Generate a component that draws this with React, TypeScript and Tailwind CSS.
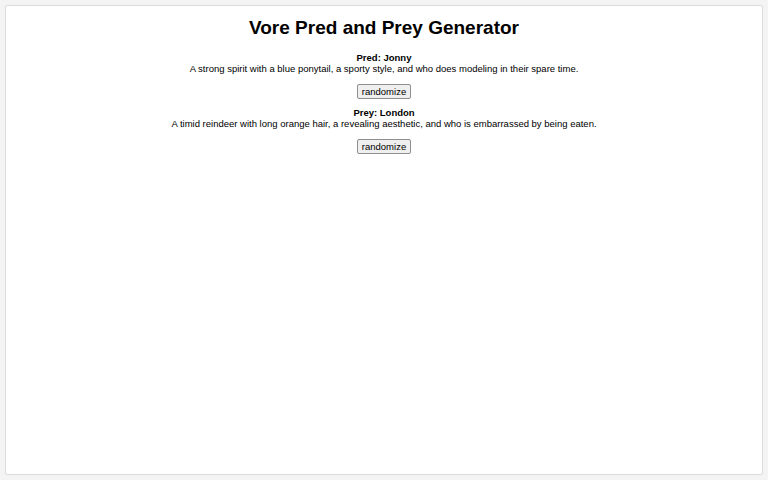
const CHARACTERS = [
  {
    role: 'Pred',
    name: 'Jonny',
    desc: 'A strong spirit with a blue ponytail, a sporty style, and who does modeling in their spare time.',
  },
  {
    role: 'Prey',
    name: 'London',
    desc: 'A timid reindeer with long orange hair, a revealing aesthetic, and who is embarrassed by being eaten.',
  },
]

export default function App() {
  return (
    <div className="h-[480px] bg-[#f4f4f4] p-[5px] font-['Liberation_Sans',Arial,sans-serif] text-black">
      <div className="h-full bg-white border border-[#dcdcdc] rounded-[2px] flex flex-col items-center pt-[10px]">
        <h1 className="text-[19px] leading-[24px] font-bold">Vore Pred and Prey Generator</h1>
        <div className="mt-[12px] flex flex-col items-center">
          {CHARACTERS.map(({ role, name, desc }) => (
            <div key={role} className="flex flex-col items-center mb-[8px]">
              <p className="text-[9.5px] leading-[11px] font-bold">
                {role}: {name}
              </p>
              <p className="text-[9.5px] leading-[11px]">{desc}</p>
              <button className="mt-[10px] h-[15px] px-[4px] text-[9.5px] leading-[11px] bg-[#efefef] border border-[#8f8f8f] rounded-[2px]">
                randomize
              </button>
            </div>
          ))}
        </div>
      </div>
    </div>
  )
}
